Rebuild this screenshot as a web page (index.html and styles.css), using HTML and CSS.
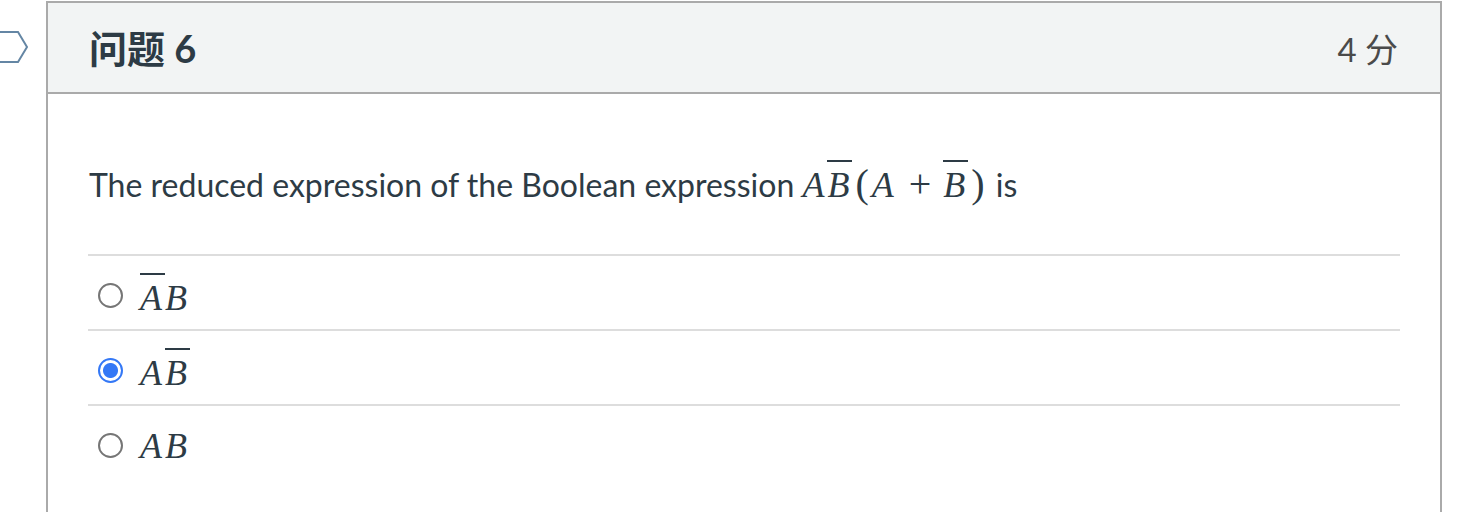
FILE: index.html
```html
<!DOCTYPE html>
<html lang="zh">
<head>
    <meta charset="UTF-8">
    <title>问题 6</title>
    <link rel="stylesheet" href="styles.css">
</head>
<body>
    <div class="question">
        <svg class="flag" width="30" height="34" viewBox="0 0 30 34">
            <path d="M-4 2 H18 L27 17 L18 32 H-4" fill="none" stroke="#6486a4" stroke-width="2"/>
        </svg>
        <div class="question-header">
            <span class="question-name">问题 6</span>
            <span class="points">4 分</span>
        </div>
        <div class="question-body">
            <p class="question-text">The reduced expression of the Boolean expression <span class="math"><i>A</i><span class="ov"><i>B</i></span><span class="paren">(</span><i>A</i><span class="op">+</span><span class="ov"><i>B</i></span><span class="paren">)</span></span> is</p>
            <div class="answers">
                <label class="answer">
                    <input type="radio" name="q6">
                    <span class="math"><span class="ov"><i>A</i></span><i>B</i></span>
                </label>
                <label class="answer">
                    <input type="radio" name="q6" checked>
                    <span class="math"><i>A</i><span class="ov"><i>B</i></span></span>
                </label>
                <label class="answer">
                    <input type="radio" name="q6">
                    <span class="math"><i>A</i><i>B</i></span>
                </label>
            </div>
        </div>
    </div>
</body>
</html>
```

FILE: styles.css
```css
body {
    margin: 0;
    padding-top: 1px;
    background: white;
    font-family: Lato, "Noto Sans CJK SC", sans-serif;
    color: #2d3b45;
}
.question {
    position: relative;
    margin-left: 46px;
    width: 1392px;
    height: 600px;
    border: 2px solid #aaaaaa;
    border-bottom: none;
}
.flag {
    position: absolute;
    left: -48px;
    top: 27px;
}
.question-header {
    display: flex;
    justify-content: space-between;
    align-items: center;
    height: 89px;
    padding: 0 42px 0 41px;
    background-color: #f2f4f4;
    border-bottom: 2px solid #aaaaaa;
}
.question-name {
    font-size: 38px;
    font-weight: bold;
    margin-top: -2px;
}
.points {
    font-size: 33px;
    color: #4a4a4a;
}
.question-body {
    padding: 0 40px;
}
.question-text {
    margin: 0;
    padding: 66px 0 0 1px;
    height: 94px;
    font-size: 32px;
    line-height: 40px;
}
.math {
    font-family: "Liberation Serif", serif;
    font-size: 36px;
    color: #2d3b45;
}
.math i {
    padding-right: 3px;
}
.paren {
    font-size: 40px;
    padding: 0 3px;
}
.op {
    font-size: 40px;
    margin: 0 12px;
}
.ov {
    display: inline-block;
    line-height: 1;
    padding-top: 5px;
    border-top: 2px solid #2d3b45;
}
.answers {
    display: flex;
    flex-direction: column;
}
.answer {
    display: flex;
    align-items: center;
    gap: 17px;
    height: 67px;
    padding: 6px 0 0 10px;
    border-top: 2px solid #dddddd;
}
.answer input {
    appearance: none;
    width: 25px;
    height: 25px;
    margin: 0;
    border: 2px solid #767676;
    border-radius: 50%;
    background: white;
}
.answer input:checked {
    border-color: #3478f6;
    background: radial-gradient(circle, #3478f6 0 7px, white 8px);
}
```
